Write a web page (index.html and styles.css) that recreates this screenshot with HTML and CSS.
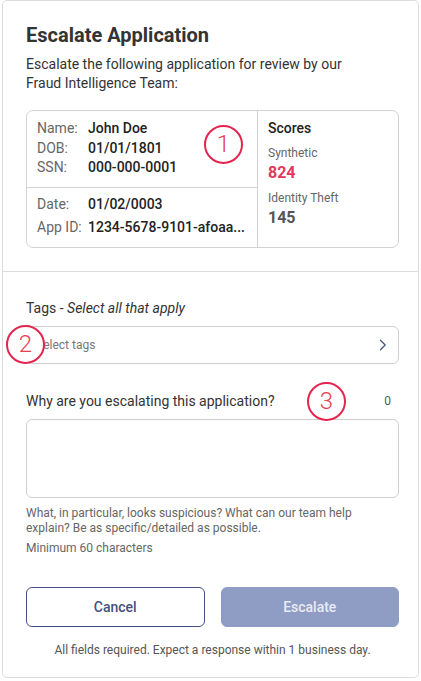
FILE: index.html
```html
<!DOCTYPE html>
<html lang="en">
<head>
<meta charset="utf-8">
<title>Escalate Application</title>
<link rel="stylesheet" href="styles.css">
</head>
<body>
<div class="card">
  <section class="top">
    <h1 class="title">Escalate Application</h1>
    <p class="intro">Escalate the following application for review by our Fraud Intelligence Team:</p>
    <div class="info">
      <div class="info-left">
        <div class="rows rows-person">
          <div class="row"><span class="lbl">Name:</span><span class="val">John Doe</span></div>
          <div class="row"><span class="lbl">DOB:</span><span class="val">01/01/1801</span></div>
          <div class="row"><span class="lbl">SSN:</span><span class="val">000-000-0001</span></div>
        </div>
        <div class="rows rows-app">
          <div class="row"><span class="lbl">Date:</span><span class="val">01/02/0003</span></div>
          <div class="row"><span class="lbl">App ID:</span><span class="val">1234-5678-9101-afoaa...</span></div>
        </div>
      </div>
      <div class="scores">
        <div class="scores-title">Scores</div>
        <div class="score-name">Synthetic</div>
        <div class="score-val score-high">824</div>
        <div class="score-name score-name-2">Identity Theft</div>
        <div class="score-val">145</div>
      </div>
    </div>
  </section>
  <section class="form">
    <div class="field-label">Tags - <em>Select all that apply</em></div>
    <div class="select">
      <span class="placeholder">Select tags</span>
      <svg class="chevron" width="8" height="12" viewBox="0 0 8 12"><path d="M1.5 1.2 L6.2 6 L1.5 10.8" fill="none" stroke="#4f5d8c" stroke-width="1.4" stroke-linecap="round" stroke-linejoin="round"/></svg>
    </div>
    <div class="question-row">
      <span class="field-label">Why are you escalating this application?</span>
      <span class="count">0</span>
    </div>
    <div class="textarea"></div>
    <p class="help">What, in particular, looks suspicious? What can our team help explain? Be as specific/detailed as possible.</p>
    <p class="minimum">Minimum 60 characters</p>
    <div class="buttons">
      <button class="btn btn-cancel">Cancel</button>
      <button class="btn btn-escalate">Escalate</button>
    </div>
    <p class="footer">All fields required. Expect a response within 1 business day.</p>
  </section>
  <div class="mark mark-1">1</div>
  <div class="mark mark-2">2</div>
  <div class="mark mark-3">3</div>
</div>
</body>
</html>
```
FILE: styles.css
```css
* { box-sizing: border-box; }
html, body { margin: 0; padding: 0; background: #fff; }
body {
  font-family: Roboto, "Liberation Sans", Arial, sans-serif;
  color: #333;
}
.card {
  position: relative;
  margin: 0 2px 0 2px;
  width: 417px;
  height: 678px;
  border: 1px solid #dcdcdc;
  border-radius: 5px;
  background: #fff;
}
.top {
  padding: 22px 19px 23px 23px;
  border-bottom: 1px solid #dcdcdc;
}
.title {
  margin: 0;
  font-size: 20px;
  line-height: 24px;
  font-weight: 700;
  color: #333;
}
.intro {
  margin: 8px 0 0;
  max-width: 330px;
  font-size: 14px;
  line-height: 19px;
  color: #333;
}
.info {
  margin-top: 17px;
  display: flex;
  border: 1px solid #d2d2d2;
  border-radius: 7px;
  height: 138px;
}
.info-left {
  width: 231px;
  border-right: 1px solid #d2d2d2;
  display: flex;
  flex-direction: column;
}
.rows { padding: 0 10px; }
.rows-person {
  padding-top: 8px;
  padding-bottom: 9px;
  border-bottom: 1px solid #d2d2d2;
}
.rows-person .row { line-height: 19.6px; }
.rows-app { padding-top: 6px; }
.rows-app .row { line-height: 20px; }
.rows-app .row + .row { margin-top: 3px; }
.row {
  display: flex;
  font-size: 14px;
  white-space: nowrap;
}
.lbl { width: 51px; color: #666; }
.val { color: #222; font-weight: 500; }
.scores {
  flex: 1;
  padding: 7px 10px 0;
}
.scores-title {
  font-size: 14px;
  line-height: 20px;
  font-weight: 500;
  color: #222;
}
.score-name {
  margin-top: 7px;
  font-size: 12px;
  line-height: 16px;
  color: #666;
}
.score-name-2 { margin-top: 7px; }
.score-val {
  margin-top: 2px;
  font-size: 16px;
  line-height: 20px;
  font-weight: 700;
  color: #555;
}
.score-high { color: #e2395a; }
.form {
  padding: 26px 19px 0 23px;
}
.field-label {
  font-size: 14px;
  line-height: 20px;
  color: #333;
}
.select {
  margin-top: 8px;
  height: 38px;
  border: 1px solid #cfcfcf;
  border-radius: 6px;
  display: flex;
  align-items: center;
  justify-content: space-between;
  padding: 0 11px 0 9px;
}
.placeholder {
  font-size: 12px;
  color: #777;
}
.chevron { display: block; }
.question-row {
  margin-top: 27px;
  display: flex;
  justify-content: space-between;
  align-items: center;
}
.count {
  font-size: 12px;
  color: #555;
  padding-right: 8px;
}
.textarea {
  margin-top: 8px;
  height: 79px;
  border: 1px solid #cfcfcf;
  border-radius: 6px;
}
.help {
  margin: 8px 0 0;
  max-width: 360px;
  font-size: 12px;
  line-height: 15px;
  color: #666;
}
.minimum {
  margin: 5px 0 0;
  font-size: 12px;
  line-height: 15px;
  color: #666;
}
.buttons {
  margin-top: 31px;
  display: flex;
  gap: 16px;
}
.btn {
  flex: 1;
  height: 40px;
  border-radius: 6px;
  font-family: inherit;
  font-size: 14px;
  font-weight: 500;
}
.btn-cancel {
  background: #fff;
  border: 1px solid #45507f;
  color: #45507f;
}
.btn-escalate {
  background: #8f9dc4;
  border: 1px solid #8f9dc4;
  color: #e8ebf4;
}
.footer {
  margin: 15px 0 0;
  text-align: center;
  font-size: 12px;
  line-height: 16px;
  color: #555;
}
.mark {
  position: absolute;
  width: 39px;
  height: 39px;
  border: 2px solid #e4254f;
  border-radius: 50%;
  background: #fff;
  color: #e6404f;
  font-size: 24px;
  font-weight: 300;
  line-height: 35px;
  text-align: center;
}
.mark-1 { left: 201px; top: 124px; background: transparent; }
.mark-2 { left: 3px; top: 324px; }
.mark-3 { left: 304px; top: 381px; }
```
